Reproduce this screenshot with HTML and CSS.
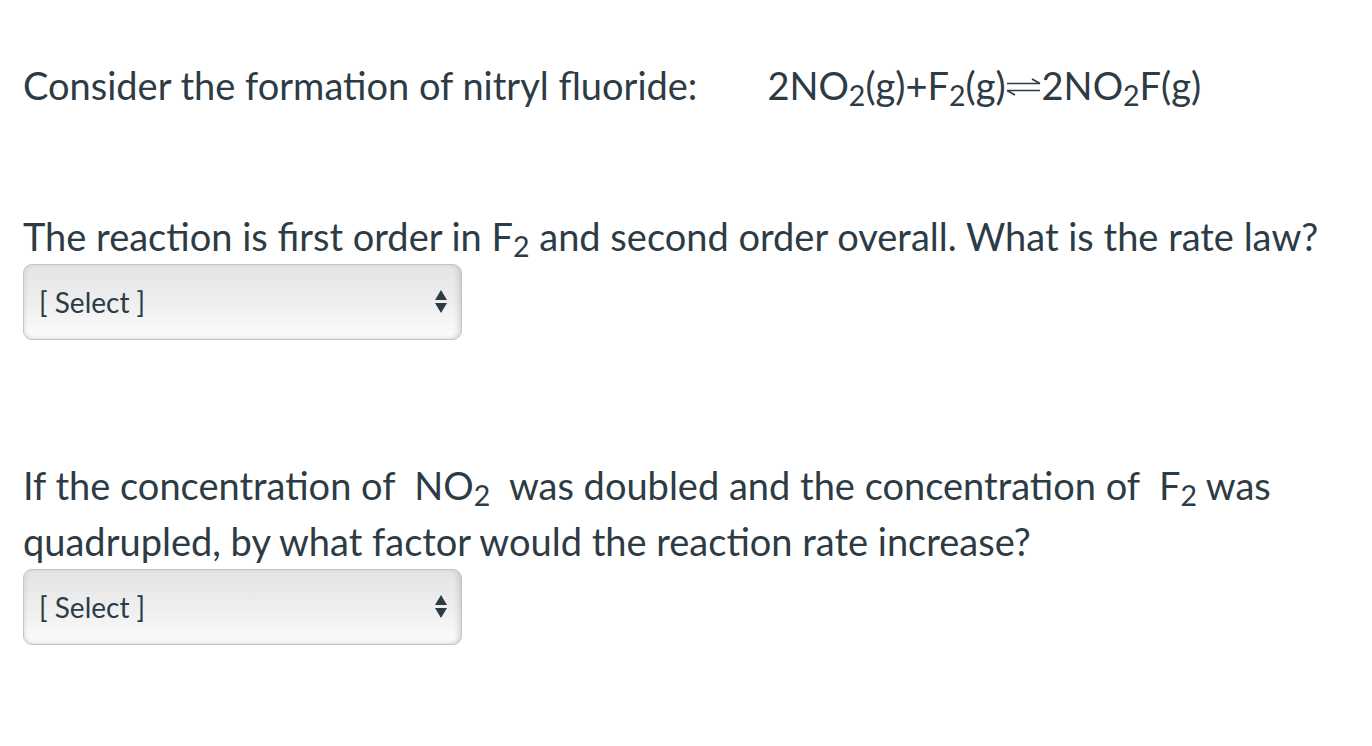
FILE: index.html
```html
<!DOCTYPE html>
<html>
<head>
<meta charset="utf-8">
<link rel="stylesheet" href="styles.css">
</head>
<body>
<div class="page">
  <p class="q q1"><span>Consider the formation of nitryl fluoride:</span><span class="eq">2NO<sub>2</sub>(g)+F<sub>2</sub>(g)<svg class="harp" width="36" height="20" viewBox="0 0 36 20"><path d="M1 6.5H34M34 6.5L26 2M1 13.5H34M1 13.5L9 18" stroke="#2d3b45" stroke-width="1.6" fill="none"/></svg>2NO<sub>2</sub>F(g)</span></p>
  <p class="q q2">The reaction is first order in F<sub>2</sub> and second order overall. What is the rate law?</p>
  <div class="sel"><span>[ Select ]</span><svg class="arr" width="12" height="24" viewBox="0 0 12 24"><path d="M6 0L12 10H0Z M0 13H12L6 23Z" fill="#2d3b45"/></svg></div>
  <p class="q q3">If the concentration of &nbsp;NO<sub>2</sub> &nbsp;was doubled and the concentration of &nbsp;F<sub>2</sub> was quadrupled, by what factor would the reaction rate increase?</p>
  <div class="sel"><span>[ Select ]</span><svg class="arr" width="12" height="24" viewBox="0 0 12 24"><path d="M6 0L12 10H0Z M0 13H12L6 23Z" fill="#2d3b45"/></svg></div>
</div>
</body>
</html>
```
FILE: styles.css
```css
html, body { margin: 0; padding: 0; background: #fff; }
.page {
  padding: 57px 0 0 23px;
  font-family: Lato, "Noto Sans", sans-serif;
  color: #2d3b45;
  font-size: 38px;
  line-height: 56px;
}
.q { margin: 0; }
.q1 { display: flex; }
.eq { margin-left: 70px; }
.harp { vertical-align: 3px; }
sub { font-size: 75%; line-height: 0; vertical-align: -0.22em; }
.q2 { margin-top: 95px; }
.q3 { margin-top: 117px; width: 1300px; }
.sel {
  box-sizing: border-box;
  width: 439px;
  height: 76px;
  margin-top: 0;
  border: 1px solid #c4c4c4;
  border-radius: 9px;
  background: linear-gradient(#e4e4e4, #eeeeee 50%, #fcfcfc);
  box-shadow: inset -5px 0 6px -3px rgba(0,0,0,0.14), inset 4px 0 5px -3px rgba(0,0,0,0.08), inset 0 -3px 4px -2px rgba(0,0,0,0.10);
  display: flex;
  align-items: center;
  justify-content: space-between;
  padding: 0 14px 0 15px;
  font-size: 28px;
}
.arr { display: block; }
```
